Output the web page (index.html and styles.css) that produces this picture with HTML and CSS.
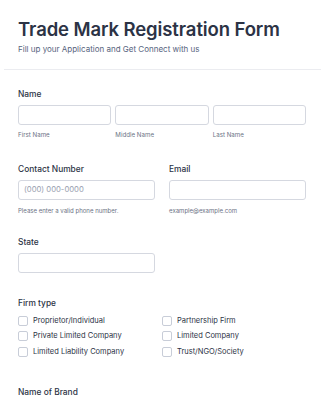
FILE: index.html
```html
<!DOCTYPE html>
<html>
<head>
<meta charset="utf-8">
<link rel="stylesheet" href="styles.css">
</head>
<body>
<div class="page">
  <header class="header">
    <h1 class="title">Trade Mark Registration Form</h1>
    <p class="subtitle">Fill up your Application and Get Connect with us</p>
  </header>
  <div class="divider"></div>
  <div class="form">
    <div class="field name-field">
      <div class="label">Name</div>
      <div class="row3">
        <div class="col"><div class="input"></div><div class="sub">First Name</div></div>
        <div class="col"><div class="input"></div><div class="sub">Middle Name</div></div>
        <div class="col"><div class="input"></div><div class="sub">Last Name</div></div>
      </div>
    </div>
    <div class="row2 contact-row">
      <div class="field">
        <div class="label">Contact Number</div>
        <div class="input"><span class="ph">(000) 000-0000</span></div>
        <div class="sub sub2">Please enter a valid phone number.</div>
      </div>
      <div class="field">
        <div class="label">Email</div>
        <div class="input"></div>
        <div class="sub sub2">example@example.com</div>
      </div>
    </div>
    <div class="field state-field">
      <div class="label">State</div>
      <div class="input half"></div>
    </div>
    <div class="field firm-field">
      <div class="label">Firm type</div>
      <div class="checks">
        <div class="check"><span class="box"></span>Proprietor/Individual</div>
        <div class="check"><span class="box"></span>Partnership Firm</div>
        <div class="check"><span class="box"></span>Private Limited Company</div>
        <div class="check"><span class="box"></span>Limited Company</div>
        <div class="check"><span class="box"></span>Limited Liability Company</div>
        <div class="check"><span class="box"></span>Trust/NGO/Society</div>
      </div>
    </div>
    <div class="field brand-field">
      <div class="label">Name of Brand</div>
    </div>
  </div>
</div>
</body>
</html>
```
FILE: styles.css
```css
* { box-sizing: border-box; }
html, body { margin: 0; padding: 0; background: #fff; }
body { font-family: Inter, "Noto Sans", sans-serif; color: #2c3345; overflow: hidden; height: 400px; }
.page { width: 325px; }
.header { padding: 18px 18px 0 18px; }
.title { margin: 0; font-size: 18.5px; font-weight: 600; line-height: 22px; color: #2c3345; letter-spacing: -0.1px; }
.subtitle { margin: 3px 0 0 0; font-size: 8px; line-height: 12px; color: #57647e; }
.divider { margin: 14px 4px 0 4px; height: 1px; background: #ebecf0; }
.form { padding: 0 19px 0 18px; }
.label { font-size: 8.4px; line-height: 12px; font-weight: 500; color: #2c3345; }
.name-field { padding-top: 18px; }
.row3 { display: grid; grid-template-columns: 1fr 1fr 1fr; gap: 4px; margin-top: 5px; }
.input { height: 20px; border: 1px solid #d5d8e0; border-radius: 3px; background: #fff; display: flex; align-items: center; padding-left: 5px; }
.ph { font-size: 7.7px; color: #9aa1b0; }
.sub { font-size: 6.2px; line-height: 9px; color: #6c7385; margin-top: 4.5px; }
.sub2 { font-size: 6.05px; margin-top: 6px; }
.contact-row { display: grid; grid-template-columns: 137px 137px; gap: 14px; padding-top: 24px; }
.contact-row .label { margin-bottom: 5px; }
.state-field { padding-top: 21.5px; }
.state-field .label { margin-bottom: 5px; }
.half { width: 137px; }
.firm-field { padding-top: 24px; }
.checks { display: grid; grid-template-columns: 144px 1fr; row-gap: 3.6px; margin-top: 5.5px; }
.check { display: flex; align-items: center; font-size: 7.5px; line-height: 12px; color: #2c3345; height: 12px; }
.box { width: 10px; height: 10px; border: 1px solid #c8cdd8; border-radius: 2px; margin-right: 5px; flex: none; }
.brand-field { padding-top: 28px; }
```
